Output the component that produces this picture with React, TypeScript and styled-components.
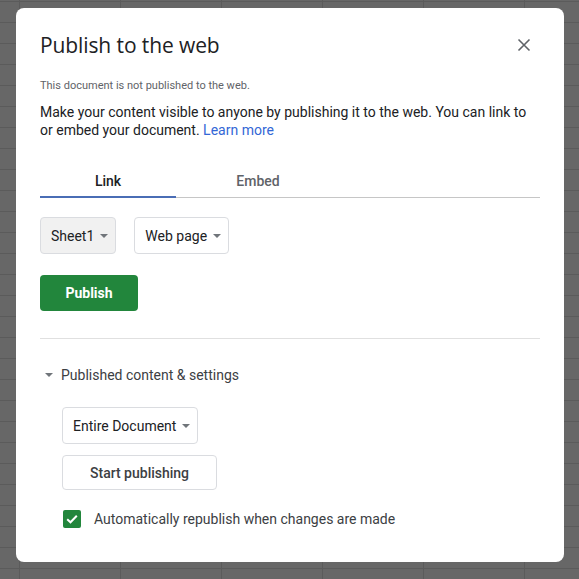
import styled, { createGlobalStyle } from 'styled-components';

const GlobalStyle = createGlobalStyle`
  html, body {
    margin: 0;
    padding: 0;
  }
  body {
    font-family: Roboto, "Liberation Sans", Arial, sans-serif;
    background-color: #676767;
    background-image:
      repeating-linear-gradient(90deg, transparent 0, transparent 20px, #5b5b5b 20px, #5b5b5b 21px, transparent 21px, transparent 101px),
      repeating-linear-gradient(180deg, #5b5b5b 0, #5b5b5b 1px, transparent 1px, transparent 21px);
    background-position: -1px 1px, 0 1px;
  }
`;

const Page = styled.div`
  height: 579px;
  padding: 8px 0 0 16px;
  box-sizing: border-box;
`;

const Dialog = styled.div`
  width: 548px;
  height: 554px;
  background: #fff;
  border-radius: 8px;
  box-sizing: border-box;
  padding: 23px 24px 0 24px;
  display: flex;
  flex-direction: column;
  color: #202124;
`;

const Header = styled.div`
  display: flex;
  align-items: center;
  justify-content: space-between;
  height: 28px;
`;

const Title = styled.h1`
  margin: 0;
  font-family: "Open Sans", Roboto, sans-serif;
  font-size: 21px;
  font-weight: 400;
  line-height: 28px;
  color: #202124;
  letter-spacing: -0.1px;
`;

const CloseButton = styled.button`
  border: none;
  background: none;
  padding: 0;
  width: 24px;
  height: 24px;
  margin-right: 4px;
  display: flex;
  align-items: center;
  justify-content: center;
  cursor: pointer;
`;

const Status = styled.p`
  margin: 20px 0 0;
  font-size: 11px;
  line-height: 14px;
  color: #5f6368;
`;

const Intro = styled.p`
  margin: 10px 0 0;
  font-size: 14px;
  line-height: 18px;
  color: #202124;
`;

const LearnMore = styled.a`
  color: #3367d6;
  text-decoration: none;
`;

const Tabs = styled.div`
  display: flex;
  margin-top: 27px;
  border-bottom: 1px solid #c6c6c6;
`;

const Tab = styled.div<{ $active?: boolean; $width: number }>`
  width: ${({ $width }) => $width}px;
  text-align: center;
  font-size: 14px;
  font-weight: 500;
  line-height: 18px;
  padding: 6px 0 8px;
  color: ${({ $active }) => ($active ? '#202124' : '#5f6368')};
  box-shadow: ${({ $active }) => ($active ? 'inset 0 -2px 0 #4a6db5' : 'none')};
  margin-bottom: -1px;
`;

const Row = styled.div`
  display: flex;
  gap: 18px;
  margin-top: 19px;
`;

const Select = styled.div<{ $pressed?: boolean }>`
  display: inline-flex;
  align-items: center;
  gap: 6px;
  height: 37px;
  box-sizing: border-box;
  padding: 0 7px 0 10px;
  border: 1px solid #dadce0;
  border-radius: 4px;
  background: ${({ $pressed }) => ($pressed ? '#f1f1f1' : '#fff')};
  font-size: 14px;
  color: #202124;
  align-self: flex-start;
`;

const Caret = styled.span`
  width: 0;
  height: 0;
  border-left: 4px solid transparent;
  border-right: 4px solid transparent;
  border-top: 4px solid #70757a;
`;

const PublishButton = styled.button`
  margin-top: 21px;
  width: 98px;
  height: 36px;
  border: none;
  border-radius: 4px;
  background: #22863c;
  color: #fff;
  font-family: Roboto, sans-serif;
  font-size: 14px;
  font-weight: 700;
  cursor: pointer;
`;

const Divider = styled.hr`
  margin: 27px 0 0;
  border: none;
  border-top: 1px solid #e0e0e0;
`;

const SectionToggle = styled.div`
  display: flex;
  align-items: center;
  gap: 8px;
  margin-top: 27px;
  padding-left: 5px;
  font-size: 14px;
  line-height: 18px;
  color: #3c4043;
`;

const Settings = styled.div`
  display: flex;
  flex-direction: column;
  align-items: flex-start;
  padding-left: 22px;
  margin-top: 23px;
`;

const OutlineButton = styled.button`
  margin-top: 11px;
  height: 35px;
  padding: 0 27px;
  border: 1px solid #dadce0;
  border-radius: 4px;
  background: #fff;
  font-family: Roboto, sans-serif;
  font-size: 14px;
  font-weight: 500;
  color: #3c4043;
  cursor: pointer;
`;

const CheckRow = styled.label`
  display: flex;
  align-items: center;
  gap: 13px;
  margin-top: 20px;
  padding-left: 1px;
  font-size: 14px;
  color: #3c4043;
`;

const CheckBox = styled.span`
  width: 18px;
  height: 18px;
  border-radius: 2px;
  background: #22863c;
  display: flex;
  align-items: center;
  justify-content: center;
`;

export default function App() {
  return (
    <>
      <GlobalStyle />
      <Page>
        <Dialog>
          <Header>
            <Title>Publish to the web</Title>
            <CloseButton aria-label="Close">
              <svg width="14" height="14" viewBox="0 0 14 14">
                <path d="M1.5 1.5 L12.5 12.5 M12.5 1.5 L1.5 12.5" stroke="#5f6368" strokeWidth="1.6" />
              </svg>
            </CloseButton>
          </Header>
          <Status>This document is not published to the web.</Status>
          <Intro>
            Make your content visible to anyone by publishing it to the web. You can link to or embed your
            document. <LearnMore href="#">Learn more</LearnMore>
          </Intro>
          <Tabs>
            <Tab $active $width={136}>Link</Tab>
            <Tab $width={164}>Embed</Tab>
          </Tabs>
          <Row>
            <Select $pressed>
              Sheet1 <Caret />
            </Select>
            <Select>
              Web page <Caret />
            </Select>
          </Row>
          <PublishButton>Publish</PublishButton>
          <Divider />
          <SectionToggle>
            <Caret />
            Published content &amp; settings
          </SectionToggle>
          <Settings>
            <Select>
              Entire Document <Caret />
            </Select>
            <OutlineButton>Start publishing</OutlineButton>
            <CheckRow>
              <CheckBox>
                <svg width="14" height="14" viewBox="0 0 14 14">
                  <path d="M2.2 7.2 L5.5 10.3 L11.8 3.8" stroke="#fff" strokeWidth="2" fill="none" />
                </svg>
              </CheckBox>
              Automatically republish when changes are made
            </CheckRow>
          </Settings>
        </Dialog>
      </Page>
    </>
  );
}
